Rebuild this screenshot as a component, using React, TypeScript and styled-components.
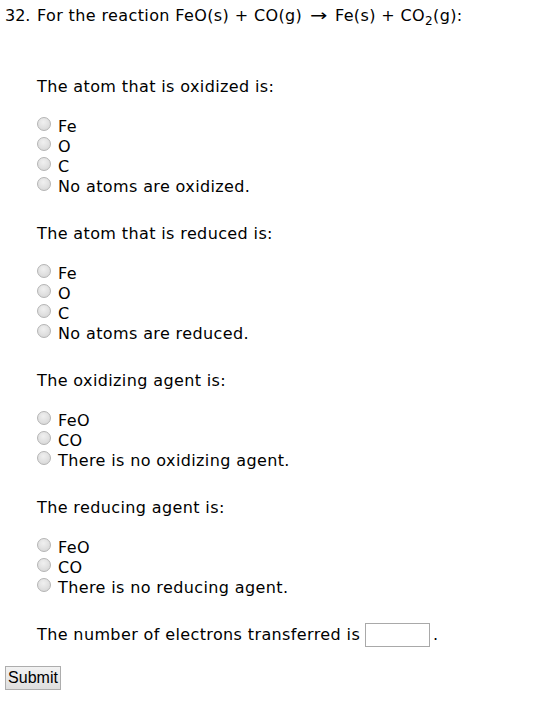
import React from "react";
import styled, { createGlobalStyle } from "styled-components";

const Global = createGlobalStyle`
  html, body { margin: 0; padding: 0; background: #fff; }
  body { font-family: "DejaVu Sans", Verdana, sans-serif; font-size: 16px; color: #000; letter-spacing: 0.38px; }
`;

const Page = styled.div`
  padding: 6px 0 0 5px;
  width: 541px;
`;

const TitleRow = styled.div`
  display: flex;
  line-height: 20px;
`;

const Num = styled.span`
  width: 32px;
  flex: none;
  letter-spacing: 0;
`;

const Sub = styled.sub`
  font-size: 12px;
  vertical-align: -4px;
  line-height: 0;
`;

const Arrow = styled.span`
  display: inline-block;
  margin: 0 4px;
  transform: scaleX(1.3);
`;

const Body = styled.div`
  padding-left: 32px;
  padding-top: 51px;
  display: flex;
  flex-direction: column;
`;

const Group = styled.div`
  margin-bottom: 27px;
`;

const Heading = styled.div`
  line-height: 20px;
  margin-bottom: 20px;
`;

const Option = styled.label`
  display: flex;
  align-items: center;
  height: 20px;
  line-height: 20px;
`;

const Radio = styled.span`
  width: 14px;
  height: 14px;
  box-sizing: border-box;
  border-radius: 50%;
  border: 1px solid #b4b4b4;
  background: radial-gradient(circle at 45% 35%, #f0f0f0 0%, #e0e0e0 55%, #d2d2d2 100%);
  margin: -6px 7px 0 0;
  flex: none;
`;

const FinalLine = styled.div`
  display: flex;
  align-items: center;
  line-height: 20px;
  height: 20px;
`;

const Blank = styled.span`
  display: inline-block;
  width: 65px;
  height: 24px;
  box-sizing: border-box;
  border: 1px solid #a9a9a9;
  margin: 0 3px 0 5px;
  background: #fff;
`;

const SubmitBtn = styled.button`
  margin-top: 21px;
  margin-left: 0;
  height: 24px;
  width: 56px;
  padding: 0;
  font-family: "Liberation Sans", Arial, sans-serif;
  font-size: 16px;
  letter-spacing: 0;
  color: #000;
  border: 1px solid #adadad;
  background: linear-gradient(#f2f2f2, #dedede);
  border-radius: 0;
`;

const groups = [
  { q: "The atom that is oxidized is:", opts: ["Fe", "O", "C", "No atoms are oxidized."] },
  { q: "The atom that is reduced is:", opts: ["Fe", "O", "C", "No atoms are reduced."] },
  { q: "The oxidizing agent is:", opts: ["FeO", "CO", "There is no oxidizing agent."] },
  { q: "The reducing agent is:", opts: ["FeO", "CO", "There is no reducing agent."] },
];

export default function App() {
  return (
    <Page>
      <Global />
      <TitleRow>
        <Num>32.</Num>
        <span>
          For the reaction FeO(s) + CO(g) <Arrow>→</Arrow> Fe(s) + CO<Sub>2</Sub>(g):
        </span>
      </TitleRow>
      <Body>
        {groups.map((g) => (
          <Group key={g.q}>
            <Heading>{g.q}</Heading>
            {g.opts.map((o) => (
              <Option key={o}>
                <Radio />
                {o}
              </Option>
            ))}
          </Group>
        ))}
        <FinalLine>
          The number of electrons transferred is <Blank />.
        </FinalLine>
      </Body>
      <SubmitBtn>Submit</SubmitBtn>
    </Page>
  );
}
